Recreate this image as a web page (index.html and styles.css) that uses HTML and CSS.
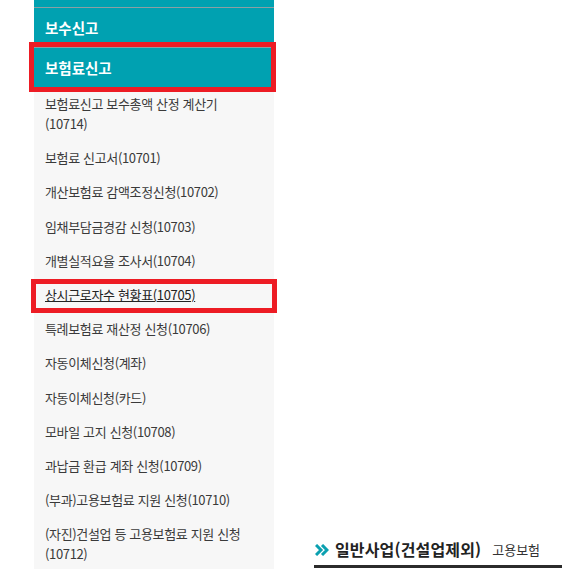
FILE: index.html
```html
<!DOCTYPE html>
<html lang="ko">
<head>
  <meta charset="UTF-8" />
  <title>보험료신고</title>
  <link rel="stylesheet" href="styles.css">
</head>
<body>

<div class="wrap">
  <div class="lnb">
    <ul class="depth1">
      <li class="cut"></li>
      <li><a href="#">보수신고</a></li>
      <li class="on mark-big"><a href="#">보험료신고</a></li>
    </ul>
    <ul class="depth2">
      <li><a href="#">보험료신고 보수총액 산정 계산기<br>(10714)</a></li>
      <li><a href="#">보험료 신고서(10701)</a></li>
      <li><a href="#">개산보험료 감액조정신청(10702)</a></li>
      <li><a href="#">임채부담금경감 신청(10703)</a></li>
      <li><a href="#">개별실적요율 조사서(10704)</a></li>
      <li class="current mark-small"><a href="#">상시근로자수 현황표(10705)</a></li>
      <li><a href="#">특례보험료 재산정 신청(10706)</a></li>
      <li><a href="#">자동이체신청(계좌)</a></li>
      <li><a href="#">자동이체신청(카드)</a></li>
      <li><a href="#">모바일 고지 신청(10708)</a></li>
      <li><a href="#">과납금 환급 계좌 신청(10709)</a></li>
      <li><a href="#">(부과)고용보험료 지원 신청(10710)</a></li>
      <li><a href="#">(자진)건설업 등 고용보험료 지원 신청<br>(10712)</a></li>
    </ul>
  </div>

  <div class="content">
    <div class="title-bar">
      <svg class="chev" width="14" height="12" viewBox="0 0 14 12">
        <path d="M1 1 L6 6 L1 11" fill="none" stroke="#0aa0b0" stroke-width="3"/>
        <path d="M7 1 L12 6 L7 11" fill="none" stroke="#0aa0b0" stroke-width="3"/>
      </svg>
      <h2>일반사업(건설업제외)</h2>
      <span class="sub">고용보험</span>
    </div>
  </div>
</div>

</body>
</html>
```

FILE: styles.css
```css
body {
  margin: 0;
  background: #fff;
  font-family: "Noto Sans CJK KR", "Noto Sans", sans-serif;
  overflow: hidden;
}
ul {
  list-style: none;
  margin: 0;
  padding: 0;
}
a {
  text-decoration: none;
  color: inherit;
}
.wrap {
  display: flex;
  height: 569px;
  overflow: hidden;
}
.lnb {
  width: 240px;
  margin-left: 34px;
  background: #f7f7f7;
  flex-shrink: 0;
}
.depth1 {
  margin-top: -33px;
}
.depth1 li {
  position: relative;
  background: #00a1b1;
  border-top: 1px solid #8c9fa3;
  height: 39px;
  display: flex;
  align-items: center;
  padding-left: 11px;
  color: #fff;
  font-size: 14.5px;
  font-weight: bold;
}
.depth1 li.cut {
  border-top: 0;
  height: 40px;
}
.depth2 li {
  position: relative;
  padding: 7.1px 11px;
  font-size: 13px;
  line-height: 20px;
  color: #3a3a3a;
  letter-spacing: -0.35px;
}
.depth2 li.current a {
  text-decoration: underline;
  color: #222;
}
.mark-big::after,
.mark-small::after {
  content: "";
  position: absolute;
  border: 5px solid #ed1c24;
  pointer-events: none;
}
.mark-big::after {
  left: -5px;
  right: -2px;
  top: -6px;
  bottom: -5px;
}
.mark-small::after {
  left: -3px;
  right: -3px;
  top: 1px;
  bottom: -1px;
}
.content {
  flex: 1;
  margin-left: 40px;
  padding-top: 533px;
}
.title-bar {
  display: flex;
  align-items: center;
  height: 32px;
  border-bottom: 3px solid #2b2b2b;
}
.chev {
  margin: 1px 6px 0 1px;
}
.title-bar h2 {
  margin: 0;
  font-size: 16px;
  font-weight: bold;
  color: #222;
  letter-spacing: 0.15px;
}
.sub {
  margin-left: 11px;
  font-size: 13px;
  color: #333;
}
```
